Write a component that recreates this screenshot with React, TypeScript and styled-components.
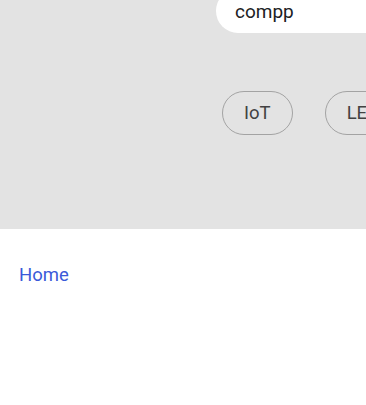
import React from "react";
import styled, { createGlobalStyle } from "styled-components";

const Global = createGlobalStyle`
  html, body { margin: 0; padding: 0; background: #ffffff; }
  body { font-family: Roboto, "Liberation Sans", sans-serif; overflow: hidden; }
`;

const Page = styled.div`
  width: 366px;
  height: 405px;
  overflow: hidden;
`;

const Header = styled.header`
  background: #e3e3e3;
  height: 229px;
  display: flex;
  flex-direction: column;
  padding-left: 216px;
  overflow: hidden;
`;

const Search = styled.div`
  margin-top: -11px;
  height: 44px;
  width: 260px;
  flex-shrink: 0;
  background: #ffffff;
  border-radius: 22px;
  display: flex;
  align-items: center;
  padding-left: 19px;
  box-sizing: border-box;
  font-size: 19px;
  color: #202124;
`;

const Chips = styled.div`
  display: flex;
  gap: 32px;
  margin-top: 58px;
  margin-left: 6px;
  flex-wrap: nowrap;
`;

const Chip = styled.span`
  flex-shrink: 0;
  height: 44px;
  box-sizing: border-box;
  padding: 0 21px;
  border: 1px solid #a3a3a3;
  border-radius: 22px;
  display: inline-flex;
  align-items: center;
  font-size: 18.5px;
  color: #424242;
`;

const Nav = styled.nav`
  padding: 35px 19px;
`;

const Link = styled.a`
  color: #3a5ad9;
  text-decoration: none;
  font-size: 18.5px;
`;

export default function App() {
  return (
    <Page>
      <Global />
      <Header>
        <Search>compp</Search>
        <Chips>
          <Chip>IoT</Chip>
          <Chip>LED</Chip>
        </Chips>
      </Header>
      <Nav>
        <Link href="#">Home</Link>
      </Nav>
    </Page>
  );
}
